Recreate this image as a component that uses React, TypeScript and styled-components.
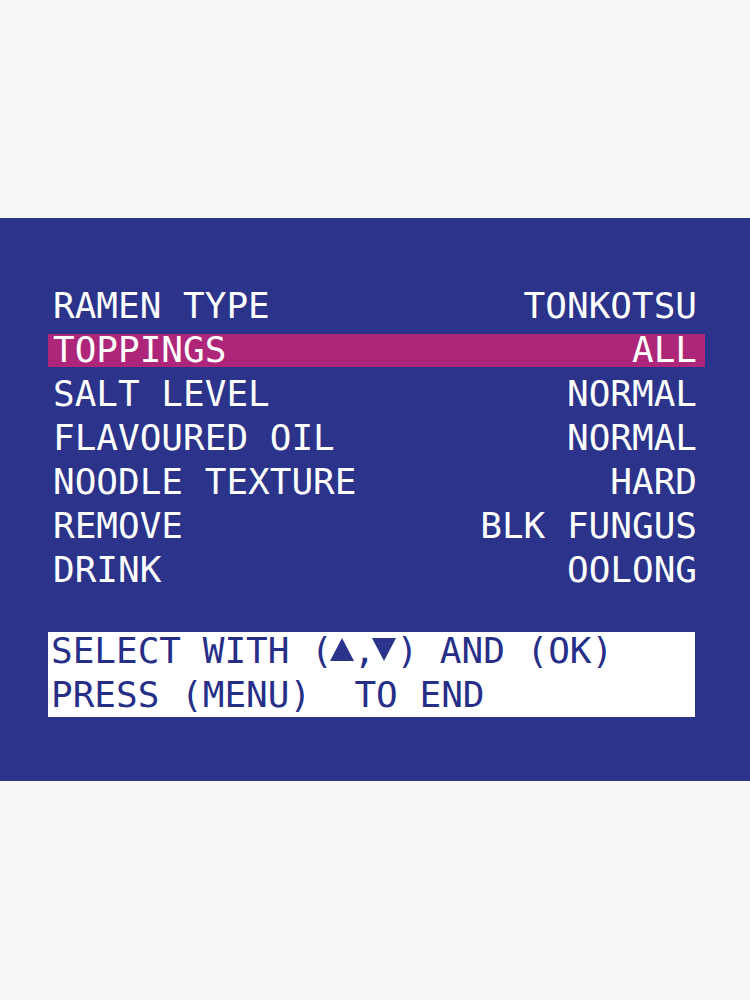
import React, { useState } from "react";
import styled, { createGlobalStyle } from "styled-components";

const GlobalStyle = createGlobalStyle`
  * { box-sizing: border-box; }
  body { margin: 0; background: #f8f8f8; }
`;

const Page = styled.div`
  min-height: 100vh;
  display: flex;
  flex-direction: column;
  justify-content: center;
  padding-bottom: 1px;
  background: #f8f8f8;
  font-family: "DejaVu Sans Mono", "Liberation Mono", monospace;
  font-size: 36px;
  line-height: 31px;
`;

const Screen = styled.main`
  padding: 72px 45px 64px 48px;
  background: #2b338b;
`;

const Options = styled.ul`
  list-style: none;
  margin: 0;
  padding: 0;
  display: flex;
  flex-direction: column;
  gap: 11px;
`;

const Option = styled.button<{ $active: boolean }>`
  display: flex;
  justify-content: space-between;
  width: 100%;
  margin: 0;
  padding: 0 8px 2px 5px;
  border: 0;
  background: ${(p) => (p.$active ? "#ae267a" : "transparent")};
  color: #fff;
  font: inherit;
  text-align: left;
  white-space: nowrap;
  cursor: pointer;
`;

const Help = styled.footer`
  display: flex;
  flex-direction: column;
  gap: 13px;
  margin: 45px 10px 0 0;
  padding: 3px 0 7px 3px;
  background: #fff;
  color: #262e88;
`;

const HelpLine = styled.p`
  margin: 0;
  height: 31px;
  white-space: pre;
`;

const Arrow = styled.svg`
  width: 24px;
  height: 23px;
  margin-left: -3px;
  vertical-align: 2px;
  fill: #2b338b;
`;

const options = [
  ["RAMEN TYPE", "TONKOTSU"],
  ["TOPPINGS", "ALL"],
  ["SALT LEVEL", "NORMAL"],
  ["FLAVOURED OIL", "NORMAL"],
  ["NOODLE TEXTURE", "HARD"],
  ["REMOVE", "BLK FUNGUS"],
  ["DRINK", "OOLONG"],
];

export default function App() {
  const [active, setActive] = useState(1);
  return (
    <Page>
      <GlobalStyle />
      <Screen>
        <Options>
          {options.map(([label, value], i) => (
            <li key={label}>
              <Option
                type="button"
                $active={i === active}
                aria-pressed={i === active}
                onClick={() => setActive(i)}
              >
                <span>{label}</span>
                <span>{value}</span>
              </Option>
            </li>
          ))}
        </Options>
        <Help>
          <HelpLine>
            {"SELECT WITH ("}
            <Arrow viewBox="0 0 24 23" role="img" aria-label="up">
              <path d="M12 0 24 23H0Z" />
            </Arrow>
            ,
            <Arrow viewBox="0 0 24 23" role="img" aria-label="down">
              <path d="M0 0H24L12 23Z" />
            </Arrow>
            {") AND (OK)"}
          </HelpLine>
          <HelpLine>{"PRESS (MENU)  TO END"}</HelpLine>
        </Help>
      </Screen>
    </Page>
  );
}
